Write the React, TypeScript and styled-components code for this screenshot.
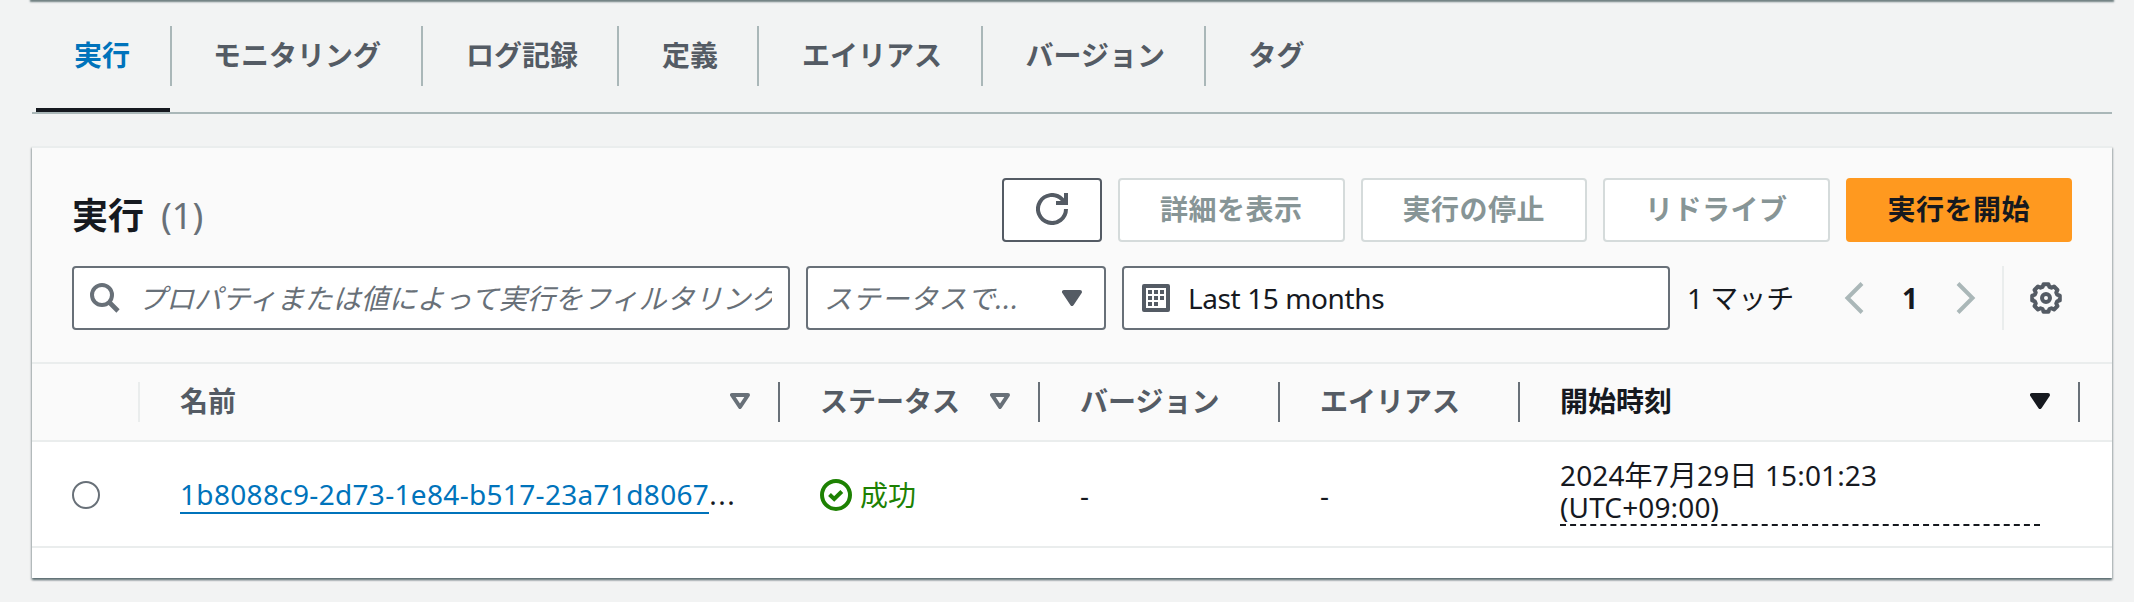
import React from "react";
import styled, { createGlobalStyle } from "styled-components";

const Global = createGlobalStyle`
  * { box-sizing: border-box; }
  body {
    margin: 0;
    background: #f2f3f3;
    color: #16191f;
    font-family: "Noto Sans", "Noto Sans CJK JP", sans-serif;
    font-size: 28px;
    line-height: 32px;
    overflow: hidden;
  }
  button, input { font: inherit; }
`;

const Page = styled.main`
  width: 2134px;
  height: 602px;
  padding: 0 22px 0 32px;
  display: flex;
  flex-direction: column;
`;

const PreviousPanel = styled.div`
  height: 0;
  box-shadow: 0 0 2px 2px #6f7f80;
`;

const Tabs = styled.nav`
  display: flex;
  height: 114px;
  flex: none;
  border-bottom: 2px solid #aab7b8;
  padding-left: 4px;
`;

const Tab = styled.div<{ $active?: boolean }>`
  display: flex;
  flex-direction: column;
  height: 112px;
  color: ${(p) => (p.$active ? "#0073bb" : "#545b64")};
  border-bottom: 4px solid ${(p) => (p.$active ? "#16191f" : "transparent")};
  padding-top: 26px;
  font-weight: 700;
`;

const TabLabel = styled.span<{ $first?: boolean; $last?: boolean; $width: number }>`
  display: flex;
  align-items: center;
  width: ${(p) => p.$width}px;
  height: 60px;
  padding: 0 0 2px ${(p) => (p.$first ? 38 : 43)}px;
  border-right: ${(p) => (p.$last ? 0 : 2)}px solid #aab7b8;
  margin-right: ${(p) => (p.$first ? -2 : 0)}px;
  white-space: nowrap;
`;

const Panel = styled.section`
  margin-top: 32px;
  height: 432px;
  display: flex;
  flex-direction: column;
  background: #fff;
  border-top: 2px solid #eaeded;
  box-shadow: 0 2px 2px 0 rgba(0, 28, 36, 0.4), 1px 2px 2px 0 rgba(0, 28, 36, 0.2), -1px 2px 2px 0 rgba(0, 28, 36, 0.2);
`;

const PanelHeader = styled.header`
  height: 214px;
  flex: none;
  background: #fafafa;
  padding: 30px 40px 0;
  display: flex;
  flex-direction: column;
  gap: 24px;
`;

const HeaderRow = styled.div`
  display: flex;
  align-items: center;
  gap: 16px;
  height: 64px;
`;

const Title = styled.h2`
  margin: 11px auto 0 0;
  font-size: 36px;
  line-height: 44px;
  font-weight: 700;
  display: flex;
  gap: 17px;
`;

const Count = styled.span`
  font-weight: 400;
  color: #687078;
`;

const Button = styled.button<{ $kind?: "icon" | "disabled" | "primary" }>`
  width: ${(p) => (p.$kind === "icon" ? 100 : 226.5)}px;
  height: 64px;
  padding: 0 0 2px;
  display: flex;
  align-items: center;
  justify-content: center;
  border-radius: 4px;
  font-weight: 700;
  letter-spacing: 0.5px;
  border: 2px solid ${(p) => (p.$kind === "icon" ? "#545b64" : p.$kind === "primary" ? "#ff991f" : "#d5dbdb")};
  background: ${(p) => (p.$kind === "primary" ? "#ff991f" : "#fff")};
  color: ${(p) => (p.$kind === "icon" ? "#545b64" : p.$kind === "primary" ? "#16191f" : "#879596")};
`;

const Field = styled.div<{ $width: number; $left: number; $right: number }>`
  display: flex;
  align-items: center;
  width: ${(p) => p.$width}px;
  height: 64px;
  flex: none;
  padding: 0 ${(p) => p.$right}px 0 ${(p) => p.$left}px;
  background: #fff;
  border: 2px solid #687078;
  border-radius: 4px;
  svg { flex: none; }
`;

const Placeholder = styled.span<{ $gap?: number; $spacing?: number }>`
  flex: 1;
  min-width: 0;
  margin-left: ${(p) => p.$gap || 0}px;
  letter-spacing: ${(p) => p.$spacing || 0}px;
  overflow: hidden;
  white-space: nowrap;
  font-style: italic;
  color: #687078;
  line-height: 40px;
`;

const RangeText = styled.span`
  margin-left: 18px;
  letter-spacing: -0.4px;
  padding-bottom: 1px;
`;

const Matches = styled.span`
  margin-left: 1px;
  width: 120px;
  white-space: nowrap;
`;

const Pager = styled.div`
  display: flex;
  align-items: center;
  justify-content: space-between;
  width: 132px;
  margin-left: 21px;
  font-weight: 700;
`;

const Settings = styled.div`
  display: flex;
  align-items: center;
  justify-content: flex-end;
  margin-left: auto;
  width: 70px;
  height: 64px;
  padding-right: 10px;
  border-left: 2px solid #eaeded;
`;

const columns = "108px 640px 260px 240px 240px 560px 1fr";

const TableHead = styled.div`
  display: grid;
  grid-template-columns: ${columns};
  align-items: center;
  height: 80px;
  flex: none;
  background: #fafafa;
  border-top: 2px solid #eaeded;
  border-bottom: 2px solid #eaeded;
`;

const HeadCell = styled.div<{ $light?: boolean; $sorted?: boolean }>`
  display: flex;
  align-items: center;
  justify-content: space-between;
  height: 40px;
  padding: 0 28px 2px 40px;
  font-weight: 700;
  white-space: nowrap;
  color: ${(p) => (p.$sorted ? "#16191f" : "#545b64")};
  border-right: 2px solid ${(p) => (p.$light ? "#eaeded" : "#687078")};
`;

const Row = styled.div`
  display: grid;
  grid-template-columns: ${columns};
  align-items: center;
  height: 106px;
  flex: none;
  border-bottom: 2px solid #eaeded;
`;

const Cell = styled.div`
  padding: 1px 0 0 40px;
  white-space: nowrap;
`;

const Radio = styled.span`
  display: block;
  width: 28px;
  height: 28px;
  border: 2px solid #687078;
  border-radius: 50%;
`;

const NameLink = styled.a`
  display: inline-block;
  color: #0073bb;
  border-bottom: 2px solid #0073bb;
  line-height: 36px;
  letter-spacing: 0.32px;
`;

const Ellipsis = styled.span`
  letter-spacing: 1.6px;
`;

const Status = styled.span`
  display: flex;
  align-items: center;
  gap: 8px;
  color: #1d8102;
`;

const Started = styled.div`
  width: 480px;
  margin-top: -4px;
  border-bottom: 2px dashed #16191f;
  padding-bottom: 1px;
  letter-spacing: 0.14px;
`;

const SortIcon = ({ filled }: { filled?: boolean }) => (
  <svg width="20" height="16" viewBox="0 0 20 16">
    <path
      d="M2 2H18L10 14Z"
      fill={filled ? "#16191f" : "none"}
      stroke={filled ? "#16191f" : "#687078"}
      strokeWidth="4"
      strokeLinejoin="round"
    />
  </svg>
);

const polar = (radius: number, degrees: number) => {
  const a = (degrees * Math.PI) / 180;
  return `${(16 + radius * Math.cos(a)).toFixed(2)} ${(16 + radius * Math.sin(a)).toFixed(2)}`;
};

const gearPath =
  "M" +
  Array.from({ length: 8 }, (_, k) => k * 45)
    .flatMap((a) => [polar(14, a - 10), polar(14, a + 10), polar(11.6, a + 17), polar(11.6, a + 28)])
    .join("L") +
  "Z";

const tabs: [string, number][] = [
  ["実行", 136],
  ["モニタリング", 252],
  ["ログ記録", 196],
  ["定義", 140],
  ["エイリアス", 223.5],
  ["バージョン", 223],
  ["タグ", 120],
];

export default function App() {
  return (
    <>
      <Global />
      <Page>
        <PreviousPanel />
        <Tabs>
          {tabs.map(([name, width], i) => (
            <Tab key={name} $active={i === 0}>
              <TabLabel $width={i === 1 ? width + 1 : width} $first={i === 0} $last={i === tabs.length - 1}>
                {name}
              </TabLabel>
            </Tab>
          ))}
        </Tabs>
        <Panel>
          <PanelHeader>
            <HeaderRow>
              <Title>
                実行<Count>(1)</Count>
              </Title>
              <Button $kind="icon" aria-label="更新">
                <svg width="32" height="32" viewBox="0 0 32 32" fill="none" stroke="#545b64" strokeWidth="4">
                  <path d="M30 16A14 14 0 1 1 25.9 6.100L28 9" />
                  <path d="M30 0V10H20" />
                </svg>
              </Button>
              <Button $kind="disabled">詳細を表示</Button>
              <Button $kind="disabled">実行の停止</Button>
              <Button $kind="disabled">リドライブ</Button>
              <Button $kind="primary">実行を開始</Button>
            </HeaderRow>
            <HeaderRow>
              <Field $width={718} $left={16} $right={16}>
                <svg width="30" height="30" viewBox="0 0 30 30" fill="none" stroke="#687078" strokeWidth="4">
                  <circle cx="12" cy="12" r="10" />
                  <path d="M19 19L28 28" strokeWidth="4.6" />
                </svg>
                <Placeholder $gap={18} $spacing={0.05}>
                  プロパティまたは値によって実行をフィルタリング
                </Placeholder>
              </Field>
              <Field $width={300} $left={16} $right={22}>
                <Placeholder $spacing={0.6}>ステータスで...</Placeholder>
                <svg width="20" height="16" viewBox="0 0 20 16">
                  <path d="M2 2H18L10 14Z" fill="#545b64" stroke="#545b64" strokeWidth="4" strokeLinejoin="round" />
                </svg>
              </Field>
              <Field $width={548} $left={18} $right={18}>
                <svg width="28" height="28" viewBox="0 0 28 28">
                  <rect x="2" y="2" width="24" height="24" fill="none" stroke="#545b64" strokeWidth="4" strokeLinejoin="round" />
                  <path
                    d="M6 6h4v4H6zM12 6h4v4h-4zM18 6h4v4h-4zM6 12h4v4H6zM12 12h4v4h-4zM18 12h4v4h-4zM6 18h4v4H6zM12 18h4v4h-4z"
                    fill="#545b64"
                  />
                </svg>
                <RangeText>Last 15 months</RangeText>
              </Field>
              <Matches>1 マッチ</Matches>
              <Pager>
                <svg width="20" height="32" viewBox="0 0 20 32" fill="none" stroke="#aab7b8" strokeWidth="4">
                  <path d="M18 1.500L3.500 16L18 30.500" />
                </svg>
                1
                <svg width="20" height="32" viewBox="0 0 20 32" fill="none" stroke="#aab7b8" strokeWidth="4">
                  <path d="M2 1.500L16.500 16L2 30.500" />
                </svg>
              </Pager>
              <Settings>
                <svg width="32" height="32" viewBox="0 0 32 32" fill="none" stroke="#545b64" strokeWidth="4">
                  <path strokeLinejoin="round" d={gearPath} />
                  <circle cx="16" cy="16" r="4" />
                </svg>
              </Settings>
            </HeaderRow>
          </PanelHeader>
          <TableHead>
            <HeadCell $light />
            <HeadCell>
              名前
              <SortIcon />
            </HeadCell>
            <HeadCell>
              ステータス
              <SortIcon />
            </HeadCell>
            <HeadCell>バージョン</HeadCell>
            <HeadCell>エイリアス</HeadCell>
            <HeadCell $sorted>
              開始時刻
              <SortIcon filled />
            </HeadCell>
          </TableHead>
          <Row>
            <Cell>
              <Radio />
            </Cell>
            <Cell>
              <NameLink>1b8088c9-2d73-1e84-b517-23a71d8067</NameLink>
              <Ellipsis>...</Ellipsis>
            </Cell>
            <Cell>
              <Status>
                <svg width="32" height="32" viewBox="0 0 32 32" fill="none" stroke="#1d8102" strokeWidth="4">
                  <circle cx="16" cy="16" r="14" />
                  <path d="M9.500 15.500L14.200 20L21.800 12.500" />
                </svg>
                成功
              </Status>
            </Cell>
            <Cell>-</Cell>
            <Cell>-</Cell>
            <Cell>
              <Started>
                2024年7月29日 15:01:23
                <br />
                (UTC+09:00)
              </Started>
            </Cell>
          </Row>
        </Panel>
      </Page>
    </>
  );
}
